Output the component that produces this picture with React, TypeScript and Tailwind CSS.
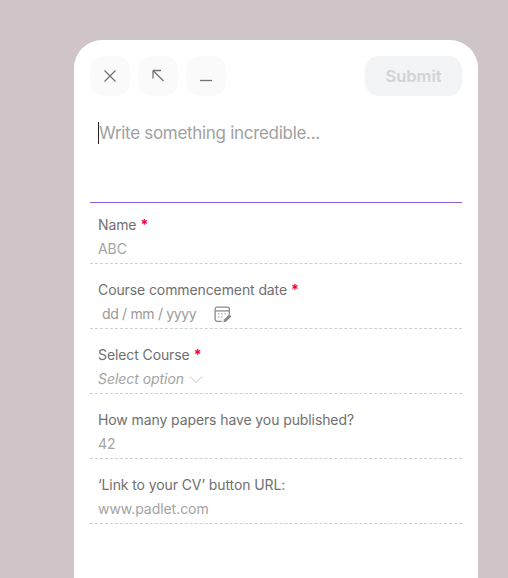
const fields = [
  { label: "Name", required: true, value: "ABC" },
  { label: "Course commencement date", required: true, date: true },
  { label: "Select Course", required: true, select: true },
  { label: "How many papers have you published?", value: "42" },
  { label: "‘Link to your CV’ button URL:", value: "www.padlet.com" },
];

function CalendarIcon() {
  return (
    <svg width="19" height="19" viewBox="0 0 18 18" fill="none" className="text-[#8a8a8a]">
      <path d="M8 15.5H4a2 2 0 0 1-2-2V4a2 2 0 0 1 2-2h9.5a2 2 0 0 1 2 2v4.5" stroke="currentColor" strokeWidth="1.2" strokeLinecap="round" />
      <path d="M2.2 5.6h13" stroke="currentColor" strokeWidth="1.2" />
      <path d="M5 8.3h1M8 8.3h1M11 8.3h1M5 11.3h1M8 11.3h1" stroke="currentColor" strokeWidth="1.2" />
      <path d="M9.8 16.4l.6-2.6 5-5 2 2-5 5z" fill="currentColor" />
    </svg>
  );
}

function FieldRow({ field, first }: { field: (typeof fields)[number]; first: boolean }) {
  return (
    <div className={first ? "h-[61px] border-b border-dashed border-[#cfcfcf] px-2 pt-[12px]" : "h-[65px] border-b border-dashed border-[#cfcfcf] px-2 pt-[16px]"}>
      <div className="h-[20px] text-[14px] leading-[20px] tracking-[-0.1px] text-[#707070]">
        {field.label}
        {field.required && <span className="ml-1 font-bold text-[#f0003c]">*</span>}
      </div>
      <div className="mt-[4px] flex h-[20px] items-center text-[14px] leading-[20px] tracking-[-0.05px] text-[#a3a3a3]">
        {field.date ? (
          <>
            <span className="ml-1 w-[111px] tracking-[-0.33px] text-[#9a9a9a]">dd / mm / yyyy</span>
            <CalendarIcon />
          </>
        ) : field.select ? (
          <>
            <span className="italic">Select option</span>
            <svg width="14" height="14" viewBox="0 0 14 14" fill="none" className="ml-[5px]">
              <path d="M1 4.5l6 6 6-6" stroke="#c4c4c4" strokeWidth="1" />
            </svg>
          </>
        ) : (
          field.value
        )}
      </div>
    </div>
  );
}

export default function App() {
  return (
    <div className="h-[578px] overflow-hidden bg-[#cfc5c9] pl-[74px] pt-[40px] font-['Inter',sans-serif]">
      <div className="h-[600px] w-[404px] rounded-[28px] bg-white p-4">
        <div className="flex items-center justify-between">
          <div className="flex gap-2">
            <button type="button" className="flex h-10 w-10 items-center justify-center rounded-[14px] bg-[#fafafa]">
              <svg width="16" height="16" viewBox="0 0 16 16" fill="none">
                <path d="M2.5 2.5l11 11M13.5 2.5l-11 11" stroke="#737373" strokeWidth="1.3" />
              </svg>
            </button>
            <button type="button" className="flex h-10 w-10 items-center justify-center rounded-[14px] bg-[#fafafa]">
              <svg width="16" height="16" viewBox="0 0 16 16" fill="none">
                <path d="M3 2.5h8M3 2.5v8M3 2.5l10.5 10.5" stroke="#737373" strokeWidth="1.3" />
              </svg>
            </button>
            <button type="button" className="flex h-10 w-10 items-center justify-center rounded-[14px] bg-[#fafafa]">
              <svg width="16" height="16" viewBox="0 0 16 16" fill="none">
                <path d="M2 12.5h12" stroke="#737373" strokeWidth="1.3" />
              </svg>
            </button>
          </div>
          <button type="button" className="h-10 w-[97px] rounded-[14px] bg-[#f3f4f6] text-[16.5px] font-semibold text-[#d1d3d6]">
            Submit
          </button>
        </div>
        <div className="mt-[26px] h-[81px] border-b border-[#8b5cd6] px-2">
          <div className="border-l border-[#222] text-[17px] leading-[22px] tracking-[-0.3px] text-[#a1a1a1]">Write something incredible...</div>
        </div>
        {fields.map((field, i) => (
          <FieldRow key={field.label} field={field} first={i === 0} />
        ))}
      </div>
    </div>
  );
}
